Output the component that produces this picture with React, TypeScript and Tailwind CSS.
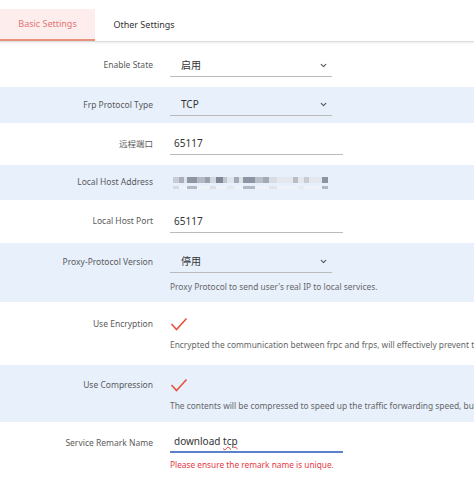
import { ChevronDown } from "lucide-react"

const font = { fontFamily: '"Noto Sans", "Noto Sans CJK SC", sans-serif' }

function Label({ children }: { children: React.ReactNode }) {
  return (
    <div className="w-[153px] shrink-0 text-right text-[8.5px] text-[#5a5a5a]">
      {children}
    </div>
  )
}

function Select({ value }: { value: string }) {
  return (
    <div className="flex h-[22px] w-[162px] items-center justify-between border-b border-[#bbb] pl-[11px] pr-[4px] text-[10px] text-[#333]">
      <span>{value}</span>
      <ChevronDown className="h-[9px] w-[9px] text-[#555]" strokeWidth={3} />
    </div>
  )
}

function Input({ value, active }: { value: React.ReactNode; active?: boolean }) {
  return (
    <div
      className={
        active
          ? "flex h-[22px] w-[173px] items-center border-b-2 border-[#5b82c9] pl-[4px] text-[10px] text-[#333]"
          : "flex h-[22px] w-[173px] items-center border-b border-[#bbb] pl-[4px] text-[10px] text-[#333]"
      }
    >
      {value}
    </div>
  )
}

function Check() {
  return (
    <svg width="18" height="14" viewBox="0 0 18 14" fill="none">
      <path d="M1.5 7 L6.5 12.5 L16.5 1.5" stroke="#e8533c" strokeWidth="1.6" />
    </svg>
  )
}

// pixelated mosaic standing in for a hidden address
const mosaicTop = [
  ["#c9ccd4", 4], ["#aab0bb", 3], ["#e0e3ea", 2], ["#8f96a3", 6], ["#b4b9c3", 5],
  ["#9aa0ad", 3], ["#d3d7de", 4], ["#7f8795", 4], ["#c0c5ce", 3], ["#e1e5ec", 4],
  ["#a5abb6", 3], ["#dde1e8", 3], ["#8e95a2", 7], ["#b9bec8", 5], ["#a3a9b5", 4],
  ["#d8dce3", 5], ["#e4e8ee", 10], ["#b8bdc6", 3], ["#e4e8ee", 4], ["#c7cbd3", 3],
  ["#e4e8ee", 8], ["#8d94a1", 4],
] as const

function Blurred() {
  return (
    <div className="flex flex-col gap-[3px] pl-[3px]">
      <div className="flex h-[6px]">
        {mosaicTop.map(([c, w], i) => (
          <div key={i} className="h-full" style={{ width: w * 1.6, background: c }} />
        ))}
      </div>
      <div className="flex h-[3px] opacity-60">
        {mosaicTop.map(([c, w], i) => (
          <div
            key={i}
            className="h-full"
            style={{ width: w * 1.6, background: i % 3 === 0 ? c : "#f2f5fa" }}
          />
        ))}
      </div>
    </div>
  )
}

export default function App() {
  return (
    <div className="h-[488px] w-[474px] overflow-hidden bg-white" style={font}>
      <div className="flex h-[42px] items-end border-b border-[#ddd] shadow-[0_1px_2px_rgba(0,0,0,0.08)]">
        <div className="flex h-[32px] w-[95px] items-center justify-center border-b-2 border-[#e9917a] bg-[#fdeeed] text-[9px] text-[#e27575]">
          Basic Settings
        </div>
        <div className="flex h-[32px] w-[98px] items-center justify-center text-[9px] text-[#333]">
          Other Settings
        </div>
      </div>

      <div className="flex h-[45px] items-center gap-[17px] pt-[2px]">
        <Label>Enable State</Label>
        <Select value="启用" />
      </div>

      <div className="flex h-[36px] items-center gap-[17px] bg-[#e8f0fc]">
        <Label>Frp Protocol Type</Label>
        <Select value="TCP" />
      </div>

      <div className="flex h-[42px] items-center gap-[17px]">
        <Label>远程端口</Label>
        <Input value="65117" />
      </div>

      <div className="flex h-[35px] items-center gap-[17px] bg-[#e8f0fc]">
        <Label>Local Host Address</Label>
        <Blurred />
      </div>

      <div className="flex h-[43px] items-center gap-[17px]">
        <Label>Local Host Port</Label>
        <Input value="65117" />
      </div>

      <div className="flex h-[59px] gap-[17px] bg-[#e8f0fc] pt-[8px]">
        <div className="pt-[5px]">
          <Label>Proxy-Protocol Version</Label>
        </div>
        <div className="flex flex-col">
          <Select value="停用" />
          <div className="mt-[8px] whitespace-nowrap text-[8.4px] text-[#666]">
            Proxy Protocol to send user's real IP to local services.
          </div>
        </div>
      </div>

      <div className="flex h-[63px] gap-[17px] pt-[15px]">
        <div className="pt-[1px]">
          <Label>Use Encryption</Label>
        </div>
        <div className="flex min-w-0 flex-col">
          <div className="h-[14px]">
            <Check />
          </div>
          <div className="mt-[8px] whitespace-nowrap text-[8.4px] text-[#666]">
            Encrypted the communication between frpc and frps, will effectively prevent the
          </div>
        </div>
      </div>

      <div className="flex h-[57px] gap-[17px] bg-[#e8f0fc] pt-[13px]">
        <div className="pt-[1px]">
          <Label>Use Compression</Label>
        </div>
        <div className="flex min-w-0 flex-col">
          <div className="h-[14px]">
            <Check />
          </div>
          <div className="mt-[8px] whitespace-nowrap text-[8.4px] text-[#666]">
            The contents will be compressed to speed up the traffic forwarding speed, but
          </div>
        </div>
      </div>

      <div className="flex gap-[17px] pt-[9px]">
        <div className="pt-[6px]">
          <Label>Service Remark Name</Label>
        </div>
        <div className="flex flex-col">
          <Input
            active
            value={
              <span>
                download{" "}
                <span className="underline decoration-[#e53935] decoration-wavy">tcp</span>
              </span>
            }
          />
          <div className="mt-[6px] text-[8.3px] text-[#e53945]">
            Please ensure the remark name is unique.
          </div>
        </div>
      </div>
    </div>
  )
}
